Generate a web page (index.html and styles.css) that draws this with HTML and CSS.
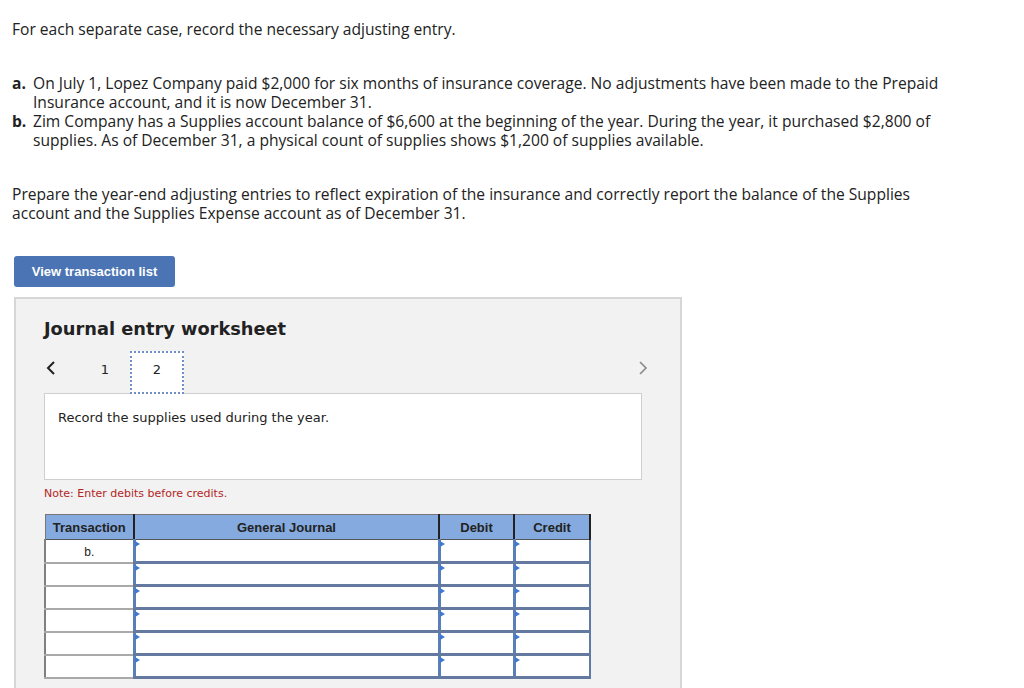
FILE: index.html
```html
<!DOCTYPE html>
<html>
<head>
<meta charset="utf-8">
<link rel="stylesheet" href="styles.css">
</head>
<body>
<div class="page">
  <p class="intro">For each separate case, record the necessary adjusting entry.</p>
  <ol class="cases">
    <li><span class="mark">a.</span><span>On July 1, Lopez Company paid $2,000 for six months of insurance coverage. No adjustments have been made to the Prepaid Insurance account, and it is now December 31.</span></li>
    <li><span class="mark">b.</span><span>Zim Company has a Supplies account balance of $6,600 at the beginning of the year. During the year, it purchased $2,800 of supplies. As of December 31, a physical count of supplies shows $1,200 of supplies available.</span></li>
  </ol>
  <p class="task">Prepare the year-end adjusting entries to reflect expiration of the insurance and correctly report the balance of the Supplies account and the Supplies Expense account as of December 31.</p>
  <button class="btn">View transaction list</button>

  <section class="worksheet">
    <h2>Journal entry worksheet</h2>
    <div class="tabs">
      <span class="arrow prev">
        <svg width="10" height="16" viewBox="0 0 10 16"><path d="M8 2 L2 8 L8 14" fill="none" stroke="#222" stroke-width="2"/></svg>
      </span>
      <span class="tab">1</span>
      <span class="tab active">2</span>
      <span class="spacer"></span>
      <span class="arrow next">
        <svg width="10" height="16" viewBox="0 0 10 16"><path d="M2 2 L8 8 L2 14" fill="none" stroke="#888" stroke-width="1.6"/></svg>
      </span>
    </div>
    <div class="instruction">Record the supplies used during the year.</div>
    <p class="note">Note: Enter debits before credits.</p>
    <table class="journal">
      <thead>
        <tr><th class="c-tr">Transaction</th><th class="c-gj">General Journal</th><th class="c-dr">Debit</th><th class="c-cr">Credit</th></tr>
      </thead>
      <tbody>
        <tr><td class="tr">b.</td><td class="in"></td><td class="in"></td><td class="in"></td></tr>
        <tr><td class="tr"></td><td class="in"></td><td class="in"></td><td class="in"></td></tr>
        <tr><td class="tr"></td><td class="in"></td><td class="in"></td><td class="in"></td></tr>
        <tr><td class="tr"></td><td class="in"></td><td class="in"></td><td class="in"></td></tr>
        <tr><td class="tr"></td><td class="in"></td><td class="in"></td><td class="in"></td></tr>
        <tr><td class="tr"></td><td class="in"></td><td class="in"></td><td class="in"></td></tr>
      </tbody>
    </table>
  </section>
</div>
</body>
</html>
```

FILE: styles.css
```css
html, body {
  margin: 0;
  padding: 0;
  background: #fff;
}

.page {
  padding: 20px 0 0 12px;
  font-family: "Open Sans", "Liberation Sans", sans-serif;
  font-size: 15.6px;
  color: #222;
  width: 940px;
}

.intro {
  margin: 0;
  line-height: 19px;
}

.cases {
  list-style: none;
  margin: 35px 0 0 0;
  padding: 0;
}

.cases li {
  display: flex;
  line-height: 19px;
}

.cases .mark {
  width: 21px;
  flex: none;
  font-weight: 700;
}

.task {
  margin: 35px 0 0 0;
  line-height: 19px;
  width: 910px;
}

.btn {
  display: block;
  margin: 33px 0 0 2px;
  width: 161px;
  height: 31px;
  border: none;
  border-radius: 3px;
  background: #4a74b3;
  color: #fff;
  font-family: "Liberation Sans", Arial, sans-serif;
  font-weight: 700;
  font-size: 13px;
  padding: 0;
}

.worksheet {
  margin: 10px 0 0 2px;
  width: 668px;
  height: 400px;
  background: #f2f2f2;
  border: 2px solid #d6d6d6;
  border-bottom: none;
  padding: 0 0 0 28px;
  box-sizing: border-box;
  font-family: "DejaVu Sans", Verdana, sans-serif;
  color: #222;
}

.worksheet h2 {
  margin: 19px 0 0 0;
  font-size: 17.8px;
  font-weight: 700;
  line-height: 22px;
}

.tabs {
  display: flex;
  align-items: stretch;
  margin-top: 11px;
  height: 43px;
  width: 598px;
}

.arrow {
  display: flex;
  align-items: center;
  padding-bottom: 10px;
}

.arrow.prev {
  margin-left: 2px;
  width: 34px;
}

.tab {
  display: flex;
  align-items: center;
  justify-content: center;
  width: 50px;
  font-size: 13px;
  padding-bottom: 6px;
}

.tab.active {
  width: 54px;
  background: #fff;
  border: 2px dotted #6f8fc6;
  box-sizing: border-box;
  position: relative;
  z-index: 1;
}

.spacer {
  flex: 1;
}

.arrow.next {
  margin-right: -6px;
}

.instruction {
  width: 598px;
  height: 87px;
  background: #fff;
  border: 1px solid #cfcfcf;
  box-sizing: border-box;
  font-size: 13px;
  padding: 16px 0 0 13px;
  margin-top: -1px;
}

.note {
  margin: 7px 0 0 0;
  font-size: 11px;
  color: #b3261e;
  line-height: 14px;
}

.journal {
  margin-top: 13px;
  border-collapse: collapse;
  font-family: "Liberation Sans", Arial, sans-serif;
}

.journal th {
  background: #84aadf;
  font-size: 13px;
  font-weight: 700;
  color: #222;
  height: 25px;
  padding: 0;
  border: 1px solid #777;
  border-right: 2px solid #222;
  box-sizing: border-box;
  border-bottom: 1px solid #555;
}

.c-tr { width: 89px; }
.c-gj { width: 305px; }
.c-dr { width: 75px; }
.c-cr { width: 76px; }

.journal td {
  height: 23px;
  padding: 0;
  box-sizing: border-box;
  background: #fff;
}

.journal td.tr {
  text-align: center;
  font-size: 12px;
  padding-top: 2px;
  border-left: 2px solid #808080;
  border-bottom: 2px solid #a9a9a9;
  border-right: 1px solid #888;
}

.journal td.in {
  border-left: 3px solid #5a7fb8;
  border-bottom: 3px solid #64799f;
  border-right: 1px solid #6d83a8;
  position: relative;
}

.journal td.in:last-child {
  border-right: 2px solid #5f7aa6;
}

.journal td.in::before {
  content: "";
  position: absolute;
  left: -1px;
  top: 1px;
  border-left: 5px solid #3f78d0;
  border-top: 3px solid transparent;
  border-bottom: 3px solid transparent;
}
```
